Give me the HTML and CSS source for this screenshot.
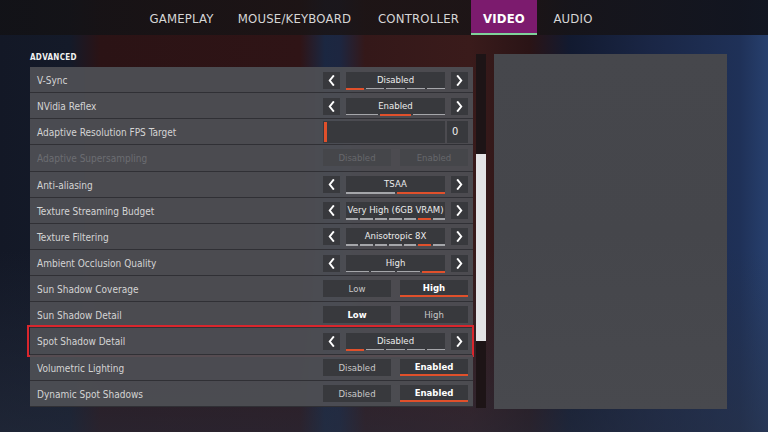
FILE: index.html
```html
<!DOCTYPE html>
<html lang="en">
<head>
<meta charset="utf-8">
<title>Video Settings</title>
<link rel="stylesheet" href="styles.css">
</head>
<body>
<div class="screen">
  <nav class="tabs">
    <div class="tab t-gameplay">GAMEPLAY</div>
    <div class="tab t-mouse">MOUSE/KEYBOARD</div>
    <div class="tab t-controller">CONTROLLER</div>
    <div class="tab t-video active">VIDEO</div>
    <div class="tab t-audio">AUDIO</div>
  </nav>
  <main class="main">
    <section class="settings">
      <div class="section-label">ADVANCED</div>
      <div class="rows">
        <div class="row">
          <span class="label">V-Sync</span>
          <div class="cycler">
            <span class="arrow"><svg viewBox="0 0 8 12"><path d="M6 1 L2 6 L6 11"/></svg></span>
            <span class="value">Disabled<span class="segs"><i class="on"></i><i></i><i></i><i></i><i></i></span></span>
            <span class="arrow"><svg viewBox="0 0 8 12"><path d="M2 1 L6 6 L2 11"/></svg></span>
          </div>
        </div>
        <div class="row">
          <span class="label">NVidia Reflex</span>
          <div class="cycler">
            <span class="arrow"><svg viewBox="0 0 8 12"><path d="M6 1 L2 6 L6 11"/></svg></span>
            <span class="value">Enabled<span class="segs"><i></i><i class="on"></i><i></i></span></span>
            <span class="arrow"><svg viewBox="0 0 8 12"><path d="M2 1 L6 6 L2 11"/></svg></span>
          </div>
        </div>
        <div class="row">
          <span class="label">Adaptive Resolution FPS Target</span>
          <div class="slider">
            <span class="track"><span class="knob"></span></span>
            <span class="num">0</span>
          </div>
        </div>
        <div class="row disabled">
          <span class="label">Adaptive Supersampling</span>
          <div class="toggle">
            <span class="opt">Disabled</span>
            <span class="opt">Enabled</span>
          </div>
        </div>
        <div class="row">
          <span class="label">Anti-aliasing</span>
          <div class="cycler">
            <span class="arrow"><svg viewBox="0 0 8 12"><path d="M6 1 L2 6 L6 11"/></svg></span>
            <span class="value">TSAA<span class="segs"><i></i><i class="on"></i></span></span>
            <span class="arrow"><svg viewBox="0 0 8 12"><path d="M2 1 L6 6 L2 11"/></svg></span>
          </div>
        </div>
        <div class="row">
          <span class="label">Texture Streaming Budget</span>
          <div class="cycler">
            <span class="arrow"><svg viewBox="0 0 8 12"><path d="M6 1 L2 6 L6 11"/></svg></span>
            <span class="value">Very High (6GB VRAM)<span class="segs"><i></i><i></i><i></i><i></i><i></i><i class="on"></i><i></i></span></span>
            <span class="arrow"><svg viewBox="0 0 8 12"><path d="M2 1 L6 6 L2 11"/></svg></span>
          </div>
        </div>
        <div class="row">
          <span class="label">Texture Filtering</span>
          <div class="cycler">
            <span class="arrow"><svg viewBox="0 0 8 12"><path d="M6 1 L2 6 L6 11"/></svg></span>
            <span class="value">Anisotropic 8X<span class="segs"><i></i><i></i><i></i><i></i><i></i><i class="on"></i><i></i></span></span>
            <span class="arrow"><svg viewBox="0 0 8 12"><path d="M2 1 L6 6 L2 11"/></svg></span>
          </div>
        </div>
        <div class="row">
          <span class="label">Ambient Occlusion Quality</span>
          <div class="cycler">
            <span class="arrow"><svg viewBox="0 0 8 12"><path d="M6 1 L2 6 L6 11"/></svg></span>
            <span class="value">High<span class="segs"><i></i><i></i><i></i><i class="on"></i></span></span>
            <span class="arrow"><svg viewBox="0 0 8 12"><path d="M2 1 L6 6 L2 11"/></svg></span>
          </div>
        </div>
        <div class="row">
          <span class="label">Sun Shadow Coverage</span>
          <div class="toggle">
            <span class="opt">Low</span>
            <span class="opt sel">High</span>
          </div>
        </div>
        <div class="row">
          <span class="label">Sun Shadow Detail</span>
          <div class="toggle">
            <span class="opt bright">Low</span>
            <span class="opt">High</span>
          </div>
        </div>
        <div class="row highlighted">
          <span class="label">Spot Shadow Detail</span>
          <div class="cycler">
            <span class="arrow"><svg viewBox="0 0 8 12"><path d="M6 1 L2 6 L6 11"/></svg></span>
            <span class="value">Disabled<span class="segs"><i class="on"></i><i></i><i></i><i></i><i></i></span></span>
            <span class="arrow"><svg viewBox="0 0 8 12"><path d="M2 1 L6 6 L2 11"/></svg></span>
          </div>
        </div>
        <div class="row">
          <span class="label">Volumetric Lighting</span>
          <div class="toggle">
            <span class="opt">Disabled</span>
            <span class="opt sel">Enabled</span>
          </div>
        </div>
        <div class="row">
          <span class="label">Dynamic Spot Shadows</span>
          <div class="toggle">
            <span class="opt">Disabled</span>
            <span class="opt sel">Enabled</span>
          </div>
        </div>
      </div>
    </section>
    <div class="scrollbar"><div class="thumb"></div></div>
    <aside class="preview"></aside>
  </main>
</div>
</body>
</html>
```
FILE: styles.css
```css
* { box-sizing: border-box; }
html, body { margin: 0; padding: 0; }
body {
  width: 768px;
  height: 432px;
  overflow: hidden;
  font-family: "DejaVu Sans Condensed", "Roboto", sans-serif;
  color: #d8d8d8;
}
.screen {
  width: 768px;
  height: 432px;
  display: flex;
  flex-direction: column;
  background:
    linear-gradient(180deg, rgba(0,0,0,0) 0, rgba(0,0,0,0) 250px, rgba(40,48,66,0.55) 432px),
    linear-gradient(90deg, #131826 0, #141a29 70px, #2b1315 100px, #2f1416 300px, #1b2741 325px, #1d2640 340px, #341819 365px, #3a1b1b 470px, #2a1416 530px, #121a30 570px, #1a2645 650px, #1f3158 740px, #27406e 768px);
}
.tabs {
  height: 35px;
  flex: none;
  display: flex;
  padding-left: 135px;
  background: linear-gradient(90deg, rgba(18,18,22,0.9) 0, rgba(26,20,21,0.85) 40%, rgba(24,20,22,0.85) 70%, rgba(16,18,26,0.9) 100%);
}
.tab {
  height: 35px;
  display: flex;
  align-items: center;
  justify-content: center;
  font-size: 13px;
  letter-spacing: 0.2px;
  color: #d6d6d6;
  padding-top: 1px;
}
.t-gameplay { width: 93px; }
.t-mouse { width: 133px; }
.t-controller { width: 110px; padding-left: 5px; }
.t-video { width: 66px; }
.t-audio { width: 72px; }
.tab.active {
  background: #7c1b6e;
  color: #ffffff;
  font-weight: bold;
  border-bottom: 2px solid #7fd39a;
  padding-top: 3px;
}
.main {
  flex: 1;
  display: flex;
  padding: 19px 0 0 30px;
}
.settings {
  width: 443px;
  display: flex;
  flex-direction: column;
}
.section-label {
  height: 13px;
  font-size: 8px;
  font-weight: bold;
  color: #f2f2f2;
  letter-spacing: 0.3px;
  line-height: 8px;
}
.rows {
  display: flex;
  flex-direction: column;
}
.row {
  height: 26.15px;
  display: flex;
  align-items: center;
  justify-content: space-between;
  padding: 0 5px 0 7px;
  background: rgba(78,79,84,0.94);
  border-bottom: 1.5px solid rgba(44,44,48,0.85);
  position: relative;
}
.label {
  font-size: 10px;
  color: #d4d4d4;
  padding-top: 2px;
}
.row.disabled .label { color: #6c6d72; }
.row.highlighted::after {
  content: "";
  position: absolute;
  left: -3px;
  right: -1px;
  top: -3px;
  bottom: -3px;
  border: 2.5px solid #d9262d;
  pointer-events: none;
}
.cycler {
  width: 145px;
  display: flex;
  gap: 6px;
  align-items: flex-start;
  margin-top: 1px;
}
.arrow {
  width: 17px;
  height: 17px;
  background: #38393d;
  display: flex;
  align-items: center;
  justify-content: center;
}
.arrow svg {
  width: 7px;
  height: 11px;
  fill: none;
  stroke: #ffffff;
  stroke-width: 2.2;
  stroke-linecap: square;
}
.value {
  width: 99px;
  height: 17px;
  background: #38393d;
  position: relative;
  font-size: 9.5px;
  color: #ececec;
  text-align: center;
  line-height: 15px;
}
.segs {
  position: absolute;
  left: 0;
  right: 0;
  bottom: -1px;
  display: flex;
  gap: 2px;
  height: 2px;
}
.segs i {
  flex: 1;
  background: #a5a6aa;
  height: 1.5px;
}
.segs i.on {
  background: #e0502b;
  height: 2px;
}
.toggle {
  width: 145px;
  display: flex;
  gap: 9px;
}
.opt {
  width: 68px;
  height: 17px;
  background: #38393d;
  font-size: 9.5px;
  color: #c8c8c8;
  text-align: center;
  line-height: 17px;
}
.opt.sel {
  color: #ffffff;
  font-weight: bold;
  border-bottom: 2px solid #e0502b;
  line-height: 16px;
}
.opt.bright { color: #ffffff; font-weight: bold; }
.row.disabled .opt {
  background: #45464a;
  color: #67686c;
}
.slider {
  width: 145px;
  display: flex;
  gap: 2px;
}
.track {
  width: 122px;
  height: 22px;
  background: #38393d;
  display: flex;
}
.knob {
  width: 3px;
  height: 20px;
  margin: 1px 0 0 1px;
  background: #e0502b;
}
.num {
  width: 21px;
  height: 22px;
  background: #38393d;
  font-size: 11px;
  color: #eeeeee;
  line-height: 22px;
  padding-left: 5px;
}
.scrollbar {
  width: 10px;
  height: 354px;
  margin-left: 3px;
  background: #1d1416;
  padding-top: 100px;
}
.thumb {
  height: 187px;
  background: #e4e4e6;
}
.preview {
  width: 233px;
  height: 355px;
  margin-left: 8px;
  background: linear-gradient(180deg, #46474c 0, #45464b 50%, #48494e 100%);
}
```
